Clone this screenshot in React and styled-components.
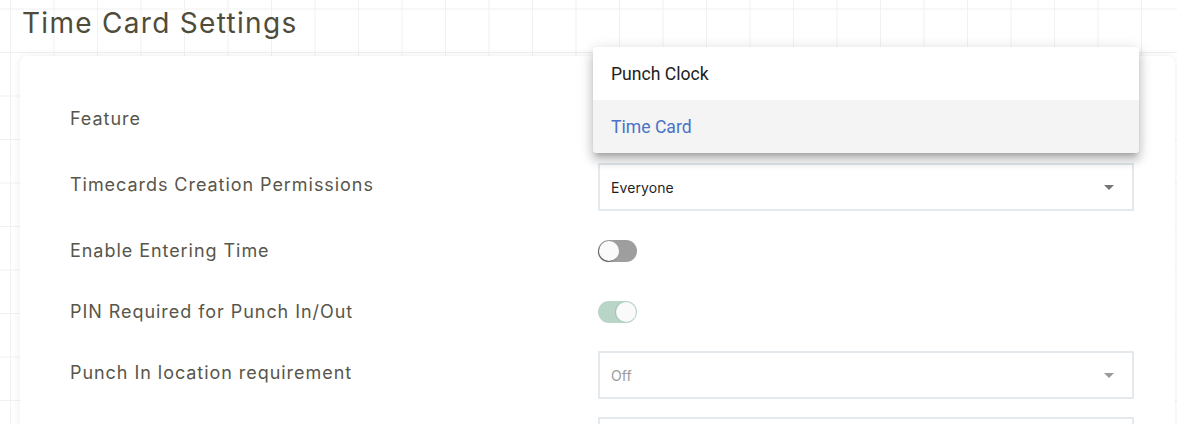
import React from "react";
import styled, { createGlobalStyle } from "styled-components";

const GlobalStyle = createGlobalStyle`
  html, body {
    margin: 0;
    padding: 0;
    background-color: #fff;
    background-image:
      linear-gradient(to right, #f1f1f1 1px, transparent 1px),
      linear-gradient(to bottom, #f1f1f1 1px, transparent 1px);
    background-size: 43.5px 43.5px;
    background-position: 10px 8.5px;
    font-family: "Inter", "Open Sans", sans-serif;
    overflow: hidden;
  }
`;

const Page = styled.div`
  padding: 4px 2px 0 20px;
`;

const Title = styled.h1`
  margin: 0 0 0 2px;
  font-family: "Inter", sans-serif;
  font-size: 28px;
  font-weight: 400;
  line-height: 38px;
  color: #4f4c3b;
  letter-spacing: 1.3px;
`;

const Card = styled.section`
  margin-top: 14px;
  background: #fff;
  border-radius: 8px;
  box-shadow: 0 0 10px rgba(0, 0, 0, 0.07);
  padding: 41px 41px 40px 50px;
  min-height: 400px;
`;

const Row = styled.div`
  display: grid;
  grid-template-columns: 528px 536px;
  align-items: center;
  min-height: ${(p) => (p.$toggle ? "43px" : "48px")};
  margin-bottom: 18px;
`;

const Label = styled.span`
  font-family: "Inter", sans-serif;
  font-size: 18px;
  font-weight: 400;
  color: #58564a;
  letter-spacing: 0.95px;
  margin-top: ${(p) => (p.$toggle ? "-1px" : "-5px")};
`;

const Field = styled.div`
  position: relative;
`;

const SelectBox = styled.div`
  box-sizing: border-box;
  height: 48px;
  border: 2px solid #e3e9ec;
  display: flex;
  align-items: center;
  justify-content: space-between;
  padding: 0 18px 0 11px;
  background: #fff;
  font-family: "Inter", sans-serif;
  font-size: 14px;
  letter-spacing: 0.1px;
  color: ${(p) => (p.$muted ? "#9a9a9a" : "#1f1f1f")};
`;

const Arrow = styled.span`
  width: 0;
  height: 0;
  border-left: 5px solid transparent;
  border-right: 5px solid transparent;
  border-top: 5px solid ${(p) => (p.$muted ? "#9a9a9a" : "#757575")};
`;

const Track = styled.div`
  position: relative;
  width: 39px;
  height: 22px;
  border-radius: 11px;
  background: ${(p) => (p.$on ? "#b9d5c8" : "#9e9e9e")};
`;

const Thumb = styled.span`
  position: absolute;
  top: 1px;
  left: ${(p) => (p.$on ? "18px" : "1px")};
  width: 20px;
  height: 20px;
  border-radius: 50%;
  background: #fafafa;
  box-shadow: ${(p) =>
    p.$on ? "-1px 0 1px rgba(0,0,0,0.12)" : "-1px 1px 1px rgba(0,0,0,0.45)"};
`;

const Menu = styled.ul`
  position: absolute;
  left: -5px;
  top: -50px;
  width: 546px;
  margin: 0;
  padding: 0;
  list-style: none;
  background: #fff;
  border-radius: 4px;
  overflow: hidden;
  z-index: 10;
  box-shadow: 0 5px 5px -3px rgba(0, 0, 0, 0.2),
    0 8px 10px 1px rgba(0, 0, 0, 0.14), 0 3px 14px 2px rgba(0, 0, 0, 0.12);
`;

const MenuItem = styled.li`
  height: 53px;
  display: flex;
  align-items: center;
  padding-left: 18px;
  font-family: "Roboto", sans-serif;
  font-size: 17.6px;
  color: ${(p) => (p.$selected ? "#4a72c6" : "#222")};
  background: ${(p) => (p.$selected ? "#f4f4f4" : "#fff")};
`;

const Select = ({ value, muted }) => (
  <SelectBox $muted={muted}>
    <span>{value}</span>
    <Arrow $muted={muted} />
  </SelectBox>
);

const Toggle = ({ on }) => (
  <Track $on={on}>
    <Thumb $on={on} />
  </Track>
);

export default function App() {
  return (
    <>
      <GlobalStyle />
      <Page>
        <Title>Time Card Settings</Title>
        <Card>
          <Row>
            <Label>Feature</Label>
            <Field>
              <Select value="" />
              <Menu>
                <MenuItem>Punch Clock</MenuItem>
                <MenuItem $selected>Time Card</MenuItem>
              </Menu>
            </Field>
          </Row>
          <Row>
            <Label>Timecards Creation Permissions</Label>
            <Select value="Everyone" />
          </Row>
          <Row $toggle>
            <Label $toggle>Enable Entering Time</Label>
            <Toggle />
          </Row>
          <Row $toggle>
            <Label $toggle>PIN Required for Punch In/Out</Label>
            <Toggle on />
          </Row>
          <Row>
            <Label>Punch In location requirement</Label>
            <Select value="Off" muted />
          </Row>
          <Row>
            <Label>Punch Out location requirement</Label>
            <Select value="Off" muted />
          </Row>
        </Card>
      </Page>
    </>
  );
}
